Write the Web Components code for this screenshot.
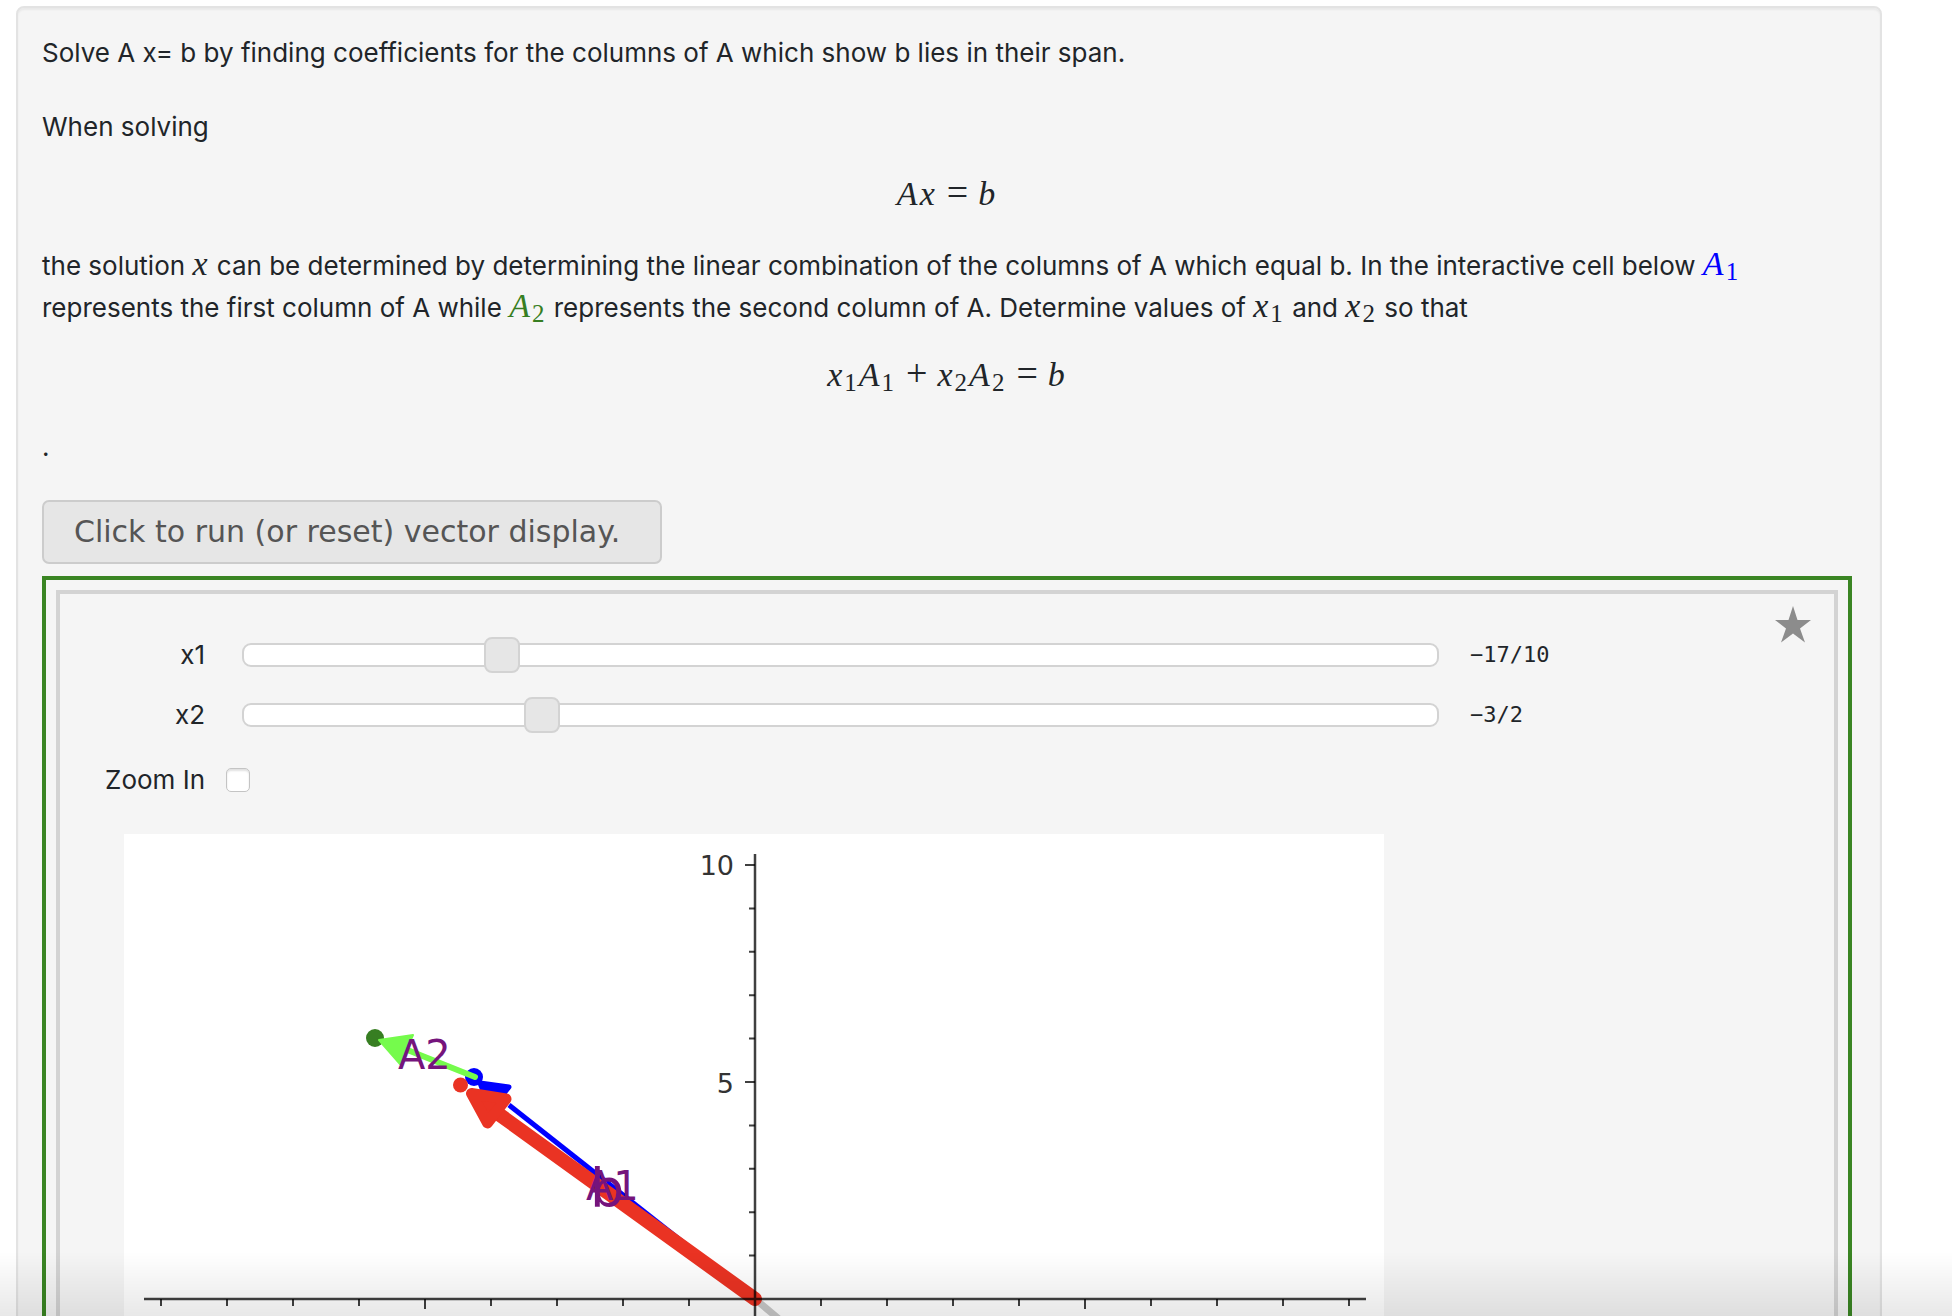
<!DOCTYPE html>
<html lang="en">
<head>
<meta charset="utf-8">
<meta name="viewport" content="width=device-width, initial-scale=1">
<title>Solve Ax = b</title>
<style>
  body {
    margin: 0;
    height: 100vh;
    overflow: hidden;
    background: #fff;
    color: #212529;
    font: 26px/42px Inter, "Liberation Sans", sans-serif;
  }
  p { margin: 0 0 32px; }
  .blue { color: #0000ff; }
  .green { color: #377e22; }
</style>
</head>
<body>
<problem-panel>
  <p>Solve A x= b by finding coefficients for the columns of A which show b lies in their span.</p>
  <p>When solving</p>
  <math-line><math-text>A</math-text><math-text>x</math-text><math-op>=</math-op><math-text>b</math-text></math-line>
  <p>the solution <math-text>x</math-text> can be determined by determining the linear combination of the columns of A which equal b. In the interactive cell below <math-text class="blue" sub="1">A</math-text> represents the first column of A while <math-text class="green" sub="2">A</math-text> represents the second column of A. Determine values of <math-text sub="1">x</math-text> and <math-text sub="2">x</math-text> so that</p>
  <math-line><math-text sub="1">x</math-text><math-text sub="1">A</math-text><math-op>+</math-op><math-text sub="2">x</math-text><math-text sub="2">A</math-text><math-op>=</math-op><math-text>b</math-text></math-line>
  <p>.</p>
  <sage-cell>
    <span slot="run">Click to run (or reset) vector display.</span>
    <value-slider label="x1" min="-3" max="3" step="0.1" value="-1.7">−17/10</value-slider>
    <value-slider label="x2" min="-3" max="3" step="0.1" value="-1.5">−3/2</value-slider>
    <check-row>Zoom In</check-row>
    <vector-plot></vector-plot>
  </sage-cell>
</problem-panel>
<bottom-fade></bottom-fade>

<script>
class ProblemPanel extends HTMLElement {
  connectedCallback() {
    this.attachShadow({ mode: 'open' });
    this.shadowRoot.innerHTML = `
      <style>
        :host {
          display: block;
          margin: 6px 70px 0 16px;
          padding: 24px 28px 24px 24px;
          border: 2px solid #e3e3e3;
          border-radius: 8px;
          background: #f5f5f5;
          box-shadow: inset 0 2px 2px rgba(0, 0, 0, 0.05);
        }
      </style>
      <slot></slot>
    `;
  }
}
customElements.define('problem-panel', ProblemPanel);

class MathText extends HTMLElement {
  connectedCallback() {
    const sub = this.getAttribute('sub');
    this.attachShadow({ mode: 'open' });
    this.shadowRoot.innerHTML = `
      <style>
        :host {
          display: inline-block;
          font-family: "Liberation Serif", serif;
          font-size: 34px;
          line-height: 24px;
        }
        i { padding-right: 2px; }
        sub {
          padding-right: 2px;
          font-size: 25px;
          line-height: 0;
          vertical-align: -5px;
        }
      </style>
      <i><slot></slot></i>${sub ? `<sub>${sub}</sub>` : ''}
    `;
  }
}
customElements.define('math-text', MathText);

class MathOp extends HTMLElement {
  connectedCallback() {
    this.attachShadow({ mode: 'open' });
    this.shadowRoot.innerHTML = `
      <style>
        :host {
          display: inline-block;
          margin: 0 10px;
          font: 38px/24px "Liberation Serif", serif;
        }
      </style>
      <slot></slot>
    `;
  }
}
customElements.define('math-op', MathOp);

class MathLine extends HTMLElement {
  connectedCallback() {
    this.attachShadow({ mode: 'open' });
    this.shadowRoot.innerHTML = `
      <style>
        :host {
          display: flex;
          justify-content: center;
          align-items: baseline;
          height: 38px;
          margin-bottom: 27px;
          line-height: 38px;
        }
      </style>
      <slot></slot>
    `;
  }
}
customElements.define('math-line', MathLine);

class SageCell extends HTMLElement {
  connectedCallback() {
    this.attachShadow({ mode: 'open' });
    this.shadowRoot.innerHTML = `
      <style>
        :host { display: block; }
        .run {
          display: block;
          height: 64px;
          margin: 0 0 12px;
          padding: 0 40px 0 30px;
          border: 2px solid #ccc;
          border-radius: 7px;
          background: #e6e6e6;
          color: #555;
          font: 30px/40px "DejaVu Sans", Verdana, sans-serif;
        }
        .output {
          padding: 10px;
          border: 4px solid #3a8523;
        }
        .session {
          display: flex;
          flex-direction: column;
          position: relative;
          padding: 31px 28px 40px 16px;
          border: 4px solid #d3d3d3;
        }
        .star {
          position: absolute;
          top: 12px;
          right: 22px;
          width: 38px;
          height: 38px;
          padding: 0;
          border: 0;
          background: none;
        }
        .star svg { display: block; }
      </style>
      <button class="run" type="button"><slot name="run"></slot></button>
      <div class="output">
        <div class="session">
          <slot></slot>
          <button class="star" type="button" aria-label="Star">
            <svg width="38" height="38" viewBox="0 0 38 38"><path fill="#8c8c8c" d="M19 0l4.500 14H37l-11 8.500 5 14-12-9-12 9 5-14L1 14h13.500z"/></svg>
          </button>
        </div>
      </div>
    `;
  }
}
customElements.define('sage-cell', SageCell);

class ValueSlider extends HTMLElement {
  connectedCallback() {
    const attr = name => this.getAttribute(name);
    this.attachShadow({ mode: 'open' });
    this.shadowRoot.innerHTML = `
      <style>
        :host {
          display: grid;
          grid-template-columns: 129px 1fr 336px;
          align-items: center;
          height: 60px;
        }
        label { text-align: right; }
        .track {
          height: 20px;
          margin: 0 31px 0 37px;
          border: 2px solid #d3d3d3;
          border-radius: 9px;
          background: #fff;
        }
        /* wider than the track, so the thumb is centred on its ends */
        input {
          display: block;
          appearance: none;
          width: calc(100% + 36px);
          height: 36px;
          margin: -8px -18px;
          background: none;
        }
        input::-webkit-slider-thumb {
          appearance: none;
          box-sizing: border-box;
          width: 36px;
          height: 36px;
          border: 2px solid #d3d3d3;
          border-radius: 8px;
          background: #e6e6e6;
        }
        output { font: 22px/40px "DejaVu Sans Mono", Menlo, monospace; }
      </style>
      <label for="range">${attr('label')}</label>
      <div class="track">
        <input id="range" type="range" min="${attr('min')}" max="${attr('max')}" step="${attr('step')}" value="${attr('value')}">
      </div>
      <output for="range"><slot></slot></output>
    `;
  }
}
customElements.define('value-slider', ValueSlider);

class CheckRow extends HTMLElement {
  connectedCallback() {
    this.attachShadow({ mode: 'open' });
    this.shadowRoot.innerHTML = `
      <style>
        :host {
          display: grid;
          grid-template-columns: 129px 24px;
          column-gap: 21px;
          align-items: center;
          height: 70px;
          margin-bottom: 19px;
        }
        label { text-align: right; }
        input {
          appearance: none;
          box-sizing: border-box;
          width: 24px;
          height: 24px;
          margin: 0;
          border: 1px solid #c4c4c4;
          border-radius: 5px;
          background: #fff;
          box-shadow: inset 0 2px 2px rgba(0, 0, 0, 0.12);
        }
        input:checked { background: #8c8c8c; }
      </style>
      <label for="box"><slot></slot></label>
      <input id="box" type="checkbox">
    `;
  }
}
customElements.define('check-row', CheckRow);

class VectorPlot extends HTMLElement {
  connectedCallback() {
    const ox = 631, oy = 465, ux = 66, uy = 43.4;
    let ticks = '';
    for (let n = -10; n <= 10; n++) {
      if (n === 0) continue;
      const major = n % 5 === 0;
      const x = ox + n * ux, y = oy - n * uy;
      if (Math.abs(n) < 10) ticks += `M${x} ${oy}v${major ? 10 : 7}`;
      ticks += `M${ox} ${y}h${major ? -10 : -6}`;
    }
    this.attachShadow({ mode: 'open' });
    this.shadowRoot.innerHTML = `
      <style>
        :host {
          display: block;
          max-width: 1260px;
          margin-left: 48px;
          background: #fff;
        }
        svg {
          display: block;
          width: 100%;
          font-family: "DejaVu Sans", sans-serif;
        }
        .num {
          font-size: 27px;
          text-anchor: end;
          fill: #333;
        }
        .name {
          font-size: 40px;
          fill: #75147c;
        }
        .result { font-size: 54px; }
      </style>
      <svg viewBox="0 0 1260 936">
        <path d="M${ox} ${oy}L900 690" stroke="#c8c8c8" stroke-width="7"/>
        <path d="M${ox} ${oy}L385 271" stroke="#0000ff" stroke-width="5"/>
        <circle cx="350" cy="243" r="9" fill="#0000ff"/>
        <path d="M356 249L385 253L381 258L368 280z" fill="#0000ff" stroke="#0000ff" stroke-width="5" stroke-linejoin="round"/>
        <path d="M${ox} ${oy}L376 281" stroke="#ea3323" stroke-width="14" stroke-linecap="round"/>
        <path d="M347.500 259.500L382 265L363.500 289z" fill="#ea3323" stroke="#ea3323" stroke-width="11" stroke-linejoin="round"/>
        <circle cx="336.500" cy="251" r="7.500" fill="#ea3323"/>
        <circle cx="251" cy="204" r="9" fill="#377e22"/>
        <path d="M351 243L286 217" stroke="#75fb4c" stroke-width="6" stroke-linecap="round"/>
        <path d="M255 206L289 201L276 230z" fill="#75fb4c" stroke="#75fb4c" stroke-width="2" stroke-linejoin="round"/>
        <path d="M20 ${oy}H1242M${ox} 20V916" stroke="#000" stroke-opacity="0.75" stroke-width="2.500"/>
        <path d="${ticks}" stroke="#000" stroke-opacity="0.75" stroke-width="2"/>
        <text class="num" x="610" y="41">10</text>
        <text class="num" x="610" y="259">5</text>
        <text class="name" x="274" y="235">A2</text>
        <text class="name" x="462" y="366">A1</text>
        <text class="name result" x="466" y="373">b</text>
      </svg>
    `;
  }
}
customElements.define('vector-plot', VectorPlot);

class BottomFade extends HTMLElement {
  connectedCallback() {
    this.attachShadow({ mode: 'open' });
    this.shadowRoot.innerHTML = `
      <style>
        :host {
          display: block;
          position: fixed;
          inset: auto 0 0;
          height: 64px;
          background: linear-gradient(rgba(0, 0, 0, 0), rgba(0, 0, 0, 0.09));
          pointer-events: none;
        }
      </style>
    `;
  }
}
customElements.define('bottom-fade', BottomFade);
</script>
</body>
</html>
